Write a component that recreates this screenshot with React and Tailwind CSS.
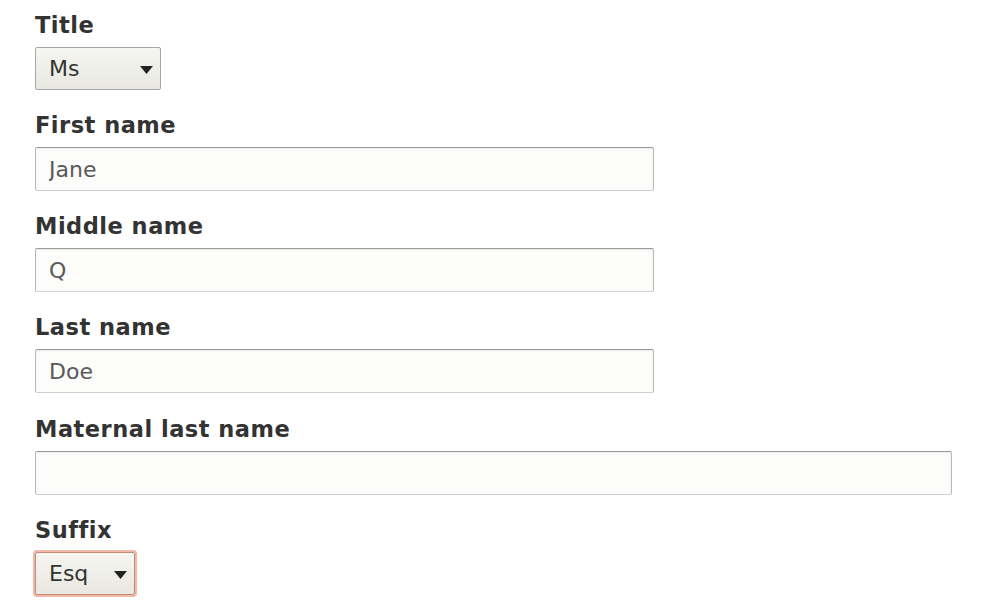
import React from 'react';

const font = { fontFamily: '"DejaVu Sans", Verdana, sans-serif' };

function Label({ children }) {
    return <label className="block text-[22.5px] font-bold tracking-[0.5px] text-[#333] leading-[28px] mb-[8px]">{children}</label>;
}

function TextInput({ value, wide }) {
    return (
        <input
            type="text"
            defaultValue={value}
            className={`block h-[44px] ${wide ? 'w-[917px]' : 'w-[619px]'} px-[13px] text-[22px] text-[#595959] bg-[#fcfcfa] border border-[#b8b8b8] border-t-[#999] border-b-[#d0d0d0] rounded-[2px] shadow-[inset_0_1px_2px_rgba(0,0,0,0.08)] outline-none`}
        />
    );
}

function Select({ value, width, error }) {
    return (
        <div
            className={`relative flex items-center h-[43px] ${width} pl-[13px] text-[22px] text-[#333] bg-gradient-to-b from-[#f6f6f2] to-[#e8e7e0] border rounded-[2px] ${error ? 'border-[#c88878] ring-2 ring-[#f0b8a8]' : 'border-[#a6a6a6]'}`}
        >
            <span>{value}</span>
            <svg className="absolute right-[7px] top-[18px]" width="13" height="8" viewBox="0 0 13 8">
                <path d="M0 0 H13 L6.5 8 Z" fill="#222" />
            </svg>
        </div>
    );
}

export default function App() {
    return (
        <div style={font} className="bg-white min-h-screen pl-[35px] pt-[11px]">
            <div className="mb-[21px]">
                <Label>Title</Label>
                <Select value="Ms" width="w-[126px]" />
            </div>
            <div className="mb-[21px]">
                <Label>First name</Label>
                <TextInput value="Jane" />
            </div>
            <div className="mb-[21px]">
                <Label>Middle name</Label>
                <TextInput value="Q" />
            </div>
            <div className="mb-[22px]">
                <Label>Last name</Label>
                <TextInput value="Doe" />
            </div>
            <div className="mb-[21px]">
                <Label>Maternal last name</Label>
                <TextInput value="" wide />
            </div>
            <div>
                <Label>Suffix</Label>
                <Select value="Esq" width="w-[100px]" error />
            </div>
        </div>
    );
}
